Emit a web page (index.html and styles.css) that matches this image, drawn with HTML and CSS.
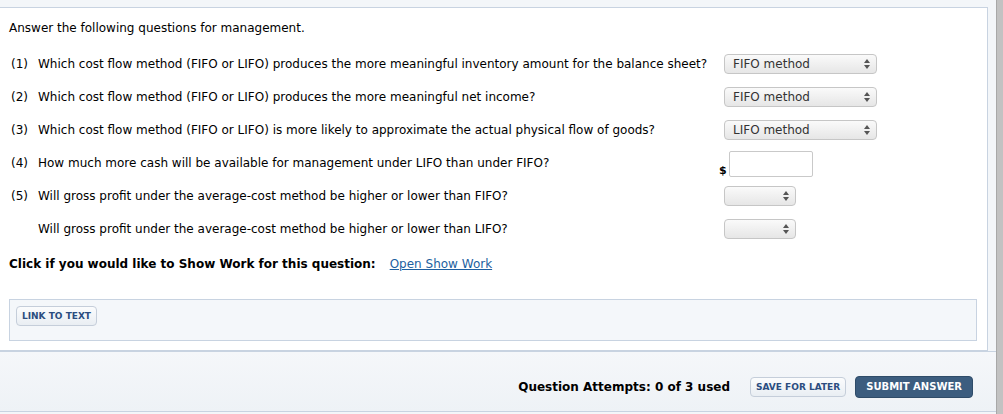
FILE: index.html
```html
<!DOCTYPE html>
<html lang="en">
<head>
  <meta charset="UTF-8">
  <title>Question</title>
  <link rel="stylesheet" href="styles.css">
</head>
<body>
  <div class="page">
    <div class="main">
      <div class="panel">
        <p class="intro">Answer the following questions for management.</p>

        <div class="questions">
          <div class="row">
            <span class="num">(1)</span>
            <span class="text">Which cost flow method (FIFO or LIFO) produces the more meaningful inventory amount for the balance sheet?</span>
            <div class="control">
              <div class="select wide"><span>FIFO method</span><svg width="6" height="10" viewBox="0 0 6 10"><path d="M0 4 L3 0 L6 4 Z M0 6 L3 10 L6 6 Z" fill="#555"/></svg></div>
            </div>
          </div>
          <div class="row">
            <span class="num">(2)</span>
            <span class="text">Which cost flow method (FIFO or LIFO) produces the more meaningful net income?</span>
            <div class="control">
              <div class="select wide"><span>FIFO method</span><svg width="6" height="10" viewBox="0 0 6 10"><path d="M0 4 L3 0 L6 4 Z M0 6 L3 10 L6 6 Z" fill="#555"/></svg></div>
            </div>
          </div>
          <div class="row">
            <span class="num">(3)</span>
            <span class="text">Which cost flow method (FIFO or LIFO) is more likely to approximate the actual physical flow of goods?</span>
            <div class="control">
              <div class="select wide"><span>LIFO method</span><svg width="6" height="10" viewBox="0 0 6 10"><path d="M0 4 L3 0 L6 4 Z M0 6 L3 10 L6 6 Z" fill="#555"/></svg></div>
            </div>
          </div>
          <div class="row">
            <span class="num">(4)</span>
            <span class="text">How much more cash will be available for management under LIFO than under FIFO?</span>
            <div class="control cash">
              <span class="dollar">$</span><input class="amount" type="text">
            </div>
          </div>
          <div class="row">
            <span class="num">(5)</span>
            <span class="text">Will gross profit under the average-cost method be higher or lower than FIFO?</span>
            <div class="control">
              <div class="select narrow"><span></span><svg width="6" height="10" viewBox="0 0 6 10"><path d="M0 4 L3 0 L6 4 Z M0 6 L3 10 L6 6 Z" fill="#555"/></svg></div>
            </div>
          </div>
          <div class="row">
            <span class="num"></span>
            <span class="text">Will gross profit under the average-cost method be higher or lower than LIFO?</span>
            <div class="control">
              <div class="select narrow"><span></span><svg width="6" height="10" viewBox="0 0 6 10"><path d="M0 4 L3 0 L6 4 Z M0 6 L3 10 L6 6 Z" fill="#555"/></svg></div>
            </div>
          </div>
        </div>

        <p class="show-work"><b>Click if you would like to Show Work for this question:</b><a href="#">Open Show Work</a></p>

        <div class="link-box">
          <button class="small-btn">LINK TO TEXT</button>
        </div>
      </div>

      <div class="footer">
        <span class="attempts">Question Attempts: 0 of 3 used</span>
        <button class="small-btn save">SAVE FOR LATER</button>
        <button class="submit">SUBMIT ANSWER</button>
      </div>
    </div>
    <div class="scrollbar"></div>
  </div>
</body>
</html>
```

FILE: styles.css
```css
html, body {
  margin: 0;
  height: 100%;
}

body {
  background: #f3f6f9;
  color: #000;
  font-family: 'DejaVu Sans', Verdana, sans-serif;
  font-size: 12px;
}

.page {
  display: flex;
  height: 414px;
}

.main {
  flex: 1;
  padding-top: 7px;
}

.scrollbar {
  width: 6px;
  background: #c2c2c2;
  border-left: 1px solid #a8a8a8;
}

.panel {
  background: #fff;
  border: 1px solid #c8d3e1;
  border-left: none;
  margin-right: 8px;
  padding: 0 10px 9px 9px;
  height: 344px;
  box-sizing: border-box;
}

.intro {
  margin: 0;
  padding-top: 13px;
  line-height: 15px;
}

.questions {
  margin-top: 11px;
}

.row {
  display: flex;
  align-items: center;
  height: 33px;
}

.num {
  width: 29px;
  padding-left: 2px;
  box-sizing: border-box;
}

.text {
  flex: 1;
}

.control {
  width: 253px;
  display: flex;
  align-items: center;
}

.select {
  display: flex;
  align-items: center;
  justify-content: space-between;
  height: 20px;
  box-sizing: border-box;
  padding: 0 6px 0 8px;
  border: 1px solid #c6c6c6;
  border-radius: 4px;
  background: linear-gradient(#fafafa, #e6e6e6);
  color: #333;
  font-size: 12px;
}

.select.wide {
  width: 153px;
}

.select.narrow {
  width: 72px;
}

.cash {
  margin-left: -4px;
  width: 258px;
  align-items: flex-end;
  padding-top: 2px;
}

.dollar {
  font-size: 11px;
  font-weight: bold;
  margin-right: 2px;
  line-height: 12px;
}

.amount {
  width: 84px;
  height: 26px;
  box-sizing: border-box;
  border: 1px solid #c9c9c9;
  border-radius: 2px;
  margin: 0;
  padding: 0 4px;
}

.show-work {
  margin: 12px 0 0;
  line-height: 15px;
}

.show-work b {
  margin-right: 14px;
}

.show-work a {
  color: #1d5fa0;
}

.link-box {
  margin-top: 27px;
  height: 42px;
  box-sizing: border-box;
  border: 1px solid #c8d3e1;
  background: #f4f7fa;
  padding: 6px 6px;
}

.small-btn {
  font-family: 'DejaVu Sans', Verdana, sans-serif;
  font-size: 9px;
  font-weight: bold;
  color: #2b4d80;
  background: linear-gradient(#fbfcfd, #e9eef3);
  border: 1px solid #c5ceda;
  border-radius: 4px;
  height: 20px;
  padding: 0 5px;
}

.footer {
  height: 61px;
  border-top: 1px solid #c8d3e1;
  border-bottom: 1px solid #c8d3e1;
  background: linear-gradient(#f5f7fa, #eef2f6);
  display: flex;
  align-items: center;
  justify-content: flex-end;
  padding-right: 23px;
  padding-top: 10px;
  box-sizing: border-box;
}

.attempts {
  font-size: 12px;
  font-weight: bold;
  margin-right: 20px;
}

.save {
  margin-right: 9px;
}

.submit {
  font-family: 'DejaVu Sans', Verdana, sans-serif;
  font-size: 10px;
  font-weight: bold;
  color: #fff;
  background: #3c5d7f;
  border: 1px solid #2f4c69;
  border-radius: 4px;
  height: 22px;
  padding: 0 10px;
}
```
